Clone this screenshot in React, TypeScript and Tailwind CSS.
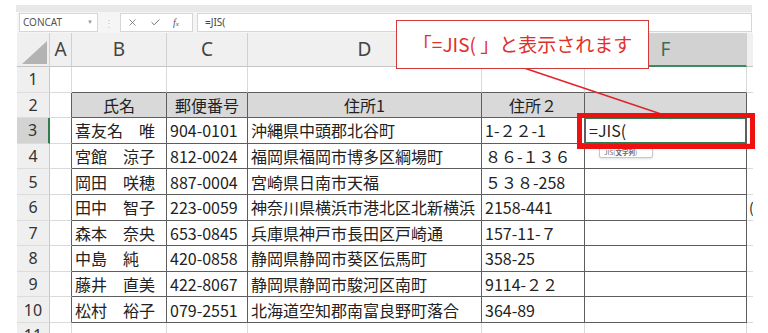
import React from 'react';
import { X, Check } from 'lucide-react';

const GRID = 'grid grid-cols-[33px_22px_95px_81px_234px_103px_162px_6px]';

const rows: string[][] = [
  ['喜友名　唯', '904-0101', '沖縄県中頭郡北谷町', '1-２２-1'],
  ['宮館　涼子', '812-0024', '福岡県福岡市博多区綱場町', '８６-１３６'],
  ['岡田　咲穂', '887-0004', '宮崎県日南市天福', '５３８-258'],
  ['田中　智子', '223-0059', '神奈川県横浜市港北区北新横浜', '2158-441'],
  ['森本　奈央', '653-0845', '兵庫県神戸市長田区戸崎通', '157-11-７'],
  ['中島　純', '420-0858', '静岡県静岡市葵区伝馬町', '358-25'],
  ['藤井　直美', '422-8067', '静岡県静岡市駿河区南町', '9114-２２'],
  ['松村　裕子', '079-2551', '北海道空知郡南富良野町落合', '364-89'],
];

const headers = ['氏名', '郵便番号', '住所1', '住所２'];

// table block is B2:F10 (col 1..5, row 2..10)
function inTable(r: number, c: number) {
  return r >= 2 && r <= 10 && c >= 1 && c <= 5;
}

function cellText(r: number, c: number): string {
  if (r === 2 && c >= 1 && c <= 4) return headers[c - 1];
  if (r >= 3 && r <= 10 && c >= 1 && c <= 4) return rows[r - 3][c - 1];
  return '';
}

function Cell({ r, c }: { r: number; c: number }) {
  const rightDark = inTable(r, c) || inTable(r, c + 1);
  const bottomDark = inTable(r, c) || inTable(r + 1, c);
  const isHead = r === 2 && c >= 1 && c <= 5;
  const active = r === 3 && c === 5;

  return (
    <div
      className={[
        'relative flex items-center overflow-hidden whitespace-nowrap border-b px-[3px] text-[16px] text-[#222]',
        c === 6 ? 'border-r-0' : 'border-r',
        rightDark ? 'border-r-[#5e5e5e]' : 'border-r-[#dadada]',
        bottomDark ? 'border-b-[#5e5e5e]' : 'border-b-[#dadada]',
        isHead ? 'justify-center bg-[#d9d9d9]' : 'bg-white',
      ].join(' ')}
    >
      {active && (
        <>
          <div className="absolute inset-[-1px] border-2 border-[#2f7d4f]" />
          <span className="pl-[1px]">=JIS(</span>
        </>
      )}
      {r === 6 && c === 6 && <span className="-ml-[1px] text-[14px]">(</span>}
      {cellText(r, c)}
    </div>
  );
}

function RowHeader({ r }: { r: number }) {
  const sel = r === 3;
  return (
    <div
      className={[
        'flex items-center justify-center border-b border-b-[#dcdcdc] font-["Noto_Sans",sans-serif] text-[16px] text-[#333]',
        sel ? 'border-r-2 border-r-[#2f7d4f] bg-[#d3d3d3]' : 'border-r border-r-[#c8c8c8] bg-[#efefef]',
      ].join(' ')}
    >
      {r}
    </div>
  );
}

function ColumnHeaders() {
  // E sits under the callout, so its letter is not drawn
  const letters = ['A', 'B', 'C', 'D', '', 'F', ''];
  return (
    <div className={`${GRID} h-[34px]`}>
      <div className="relative border-r border-b border-r-[#d0d0d0] border-b-[#c4c4c4] bg-[#efefef]">
        <svg className="absolute bottom-[2px] right-[2px]" width="25" height="23" viewBox="0 0 25 23">
          <polygon points="25,0 25,23 0,23" fill="#b3b3b3" />
        </svg>
      </div>
      {letters.map((l, i) => (
        <div
          key={i}
          className={[
            'flex items-center justify-center font-["Noto_Sans",sans-serif] text-[19px]',
            i === 6 ? '' : 'border-r border-r-[#d0d0d0]',
            l === 'F'
              ? 'border-b-2 border-b-[#3c8a5e] bg-[#d2d2d2] text-[#3a6e4e]'
              : 'border-b border-b-[#c4c4c4] bg-[#f0f0f0] text-[#444]',
          ].join(' ')}
        >
          {l}
        </div>
      ))}
    </div>
  );
}

function FormulaBar() {
  return (
    <>
      <div className="ml-[16px] mt-[5px] h-[7px] w-[736px] bg-[#e8e8e8]" />
      <div className="ml-[17px] flex h-[21px] w-[735px] items-center bg-[#f5f5f5] pl-[2px] font-['Noto_Sans',sans-serif]">
        <div className="flex h-[19px] w-[79px] items-center justify-between border border-[#d6d6d6] bg-white pl-[3px] pr-[4px] text-[10px] text-[#555]">
          CONCAT
          <span className="text-[6px] text-[#999]">▼</span>
        </div>
        <span className="ml-[6px] w-[8px] text-center text-[10px] leading-none text-[#c4c4c4]">⋮</span>
        <div className="relative ml-[8px] h-[19px] w-[73px] border border-[#d6d6d6] bg-white">
          <X className="absolute left-[6px] top-[3px] h-[11px] w-[11px] text-[#666]" strokeWidth={1.6} />
          <Check className="absolute left-[29px] top-[3px] h-[11px] w-[11px] text-[#666]" strokeWidth={2} />
          <span className="absolute left-[52px] top-[1px] font-['Liberation_Serif',serif] text-[10px] italic text-[#555]">
            f<span className="text-[7px]">x</span>
          </span>
        </div>
        <div className="ml-[4px] flex h-[19px] flex-1 items-center border border-[#d6d6d6] bg-white pl-[7px] text-[10px] text-[#444]">
          =JIS(
        </div>
      </div>
    </>
  );
}

export default function App() {
  const rowNums = [1, 2, 3, 4, 5, 6, 7, 8, 9, 10, 11];
  return (
    <div className="relative h-[333px] w-[768px] overflow-hidden bg-white font-['Noto_Sans_CJK_JP','Noto_Sans',sans-serif]">
      <FormulaBar />

      <div className="ml-[17px] w-[736px]">
        <ColumnHeaders />
        {rowNums.map((r) => (
          <div key={r} className={`${GRID} h-[25.6px]`}>
            <RowHeader r={r} />
            {[0, 1, 2, 3, 4, 5, 6].map((c) => (
              <Cell key={c} r={r} c={c} />
            ))}
          </div>
        ))}
      </div>

      {/* function hint under the active cell */}
      <div className="absolute left-[599px] top-[147px] flex h-[11px] w-[54px] items-center whitespace-nowrap rounded-[2px] border border-[#c8c8c8] bg-white pl-[4px] text-[6.5px] leading-none text-[#666] shadow-sm">
        JIS(<b>文字列</b>)
      </div>

      {/* callout leader line */}
      <svg className="pointer-events-none absolute inset-0" width="768" height="333">
        <line x1="524" y1="68" x2="661" y2="114" stroke="#e0242a" strokeWidth="1.5" />
      </svg>

      {/* red highlight around F3 */}
      <div className="absolute left-[577px] top-[113px] h-[36px] w-[178px] border-[5px] border-[#ee1111]" />

      {/* callout */}
      <div className="absolute left-[396px] top-[20px] flex h-[49px] w-[253px] items-center justify-center border border-[#d23a3a] bg-white text-[19px] text-[#e0302b]">
        「=JIS( 」と表示されます
      </div>
    </div>
  );
}
